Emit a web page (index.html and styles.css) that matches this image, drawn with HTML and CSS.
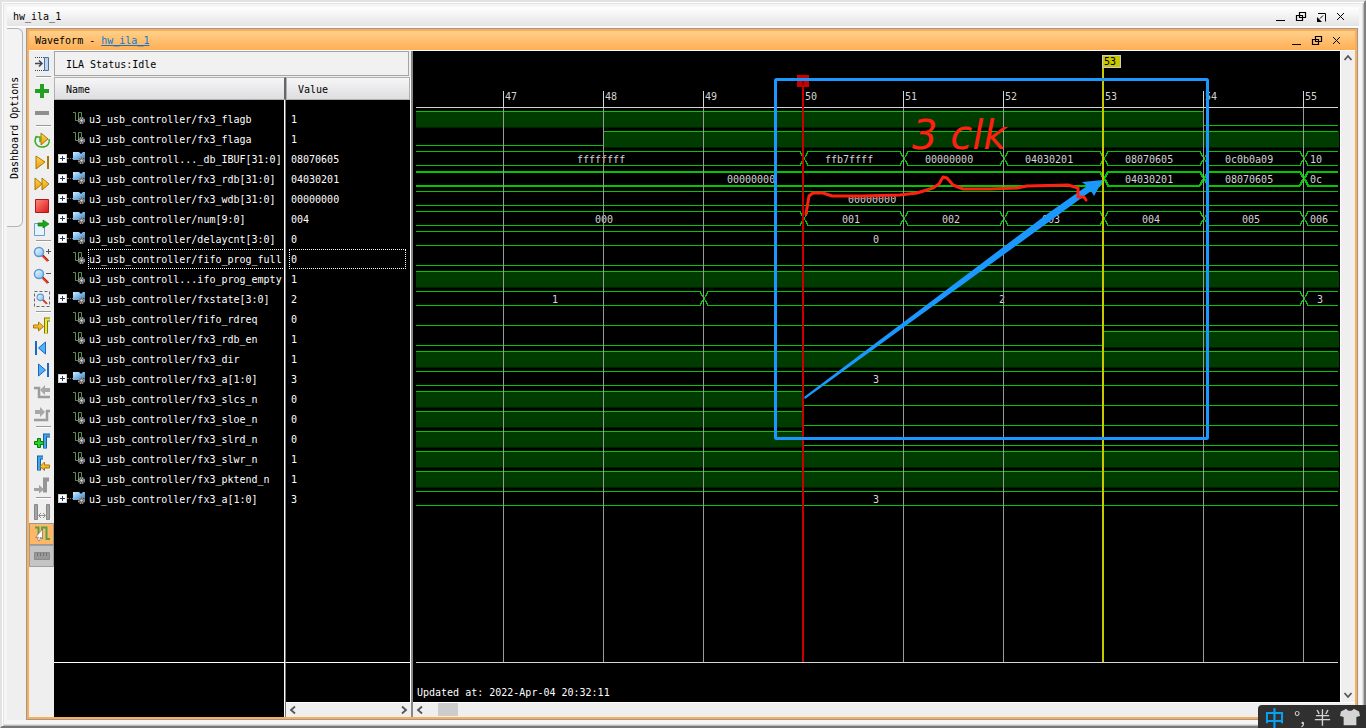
FILE: index.html
```html
<!DOCTYPE html>
<html lang="en">
<head>
<meta charset="utf-8">
<title>hw_ila_1</title>
<link rel="stylesheet" href="styles.css">
</head>
<body>
<svg class="defs" aria-hidden="true">
  <defs>
    <linearGradient id="gold" x2="0" y2="1"><stop offset="0" stop-color="#ffd84a"/><stop offset="1" stop-color="#f09a10"/></linearGradient>
    <linearGradient id="sky" x2="1" y2="1"><stop offset="0" stop-color="#d4efff"/><stop offset="1" stop-color="#1b7fd0"/></linearGradient>
    <linearGradient id="lens" x2="1" y2="1"><stop offset="0" stop-color="#f0faff"/><stop offset="1" stop-color="#7cc0f4"/></linearGradient>
    <linearGradient id="ruby" x2="1" y2="1"><stop offset="0" stop-color="#ff8a80"/><stop offset="1" stop-color="#d81818"/></linearGradient>
    <symbol id="i-dock" viewBox="0 0 18 18"><path d="M2 2.500h9M2 15.500h9" stroke="#345" stroke-dasharray="1 1"/><path d="M2 8.500h7M6 5.500l3 3-3 3" fill="none" stroke="#445" stroke-width="1.500"/><path d="M11.500 2.500h4v13h-4z" fill="#bcd4f0" stroke="#4a6fa5"/></symbol>
    <symbol id="i-add" viewBox="0 0 18 18"><path d="M7 2h4v5h5v4h-5v5H7v-5H2V7h5z" fill="#22a022"/></symbol>
    <symbol id="i-remove" viewBox="0 0 18 18"><path d="M2 7h14v4H2z" fill="#8e8e8e"/></symbol>
    <symbol id="i-rerun" viewBox="0 0 18 18"><path d="M8 2l7 6-7 6z" fill="url(#gold)" stroke="#a8780a"/><path d="M4 5C0 10 3 16 9 16s8-4 7-8M2 6h5v5" fill="none" stroke="#3faa2a" stroke-width="1.500"/></symbol>
    <symbol id="i-run" viewBox="0 0 18 18"><path d="M3 3l9 6-9 7z" fill="url(#gold)" stroke="#a8780a"/><path d="M14 3h2v13h-2z" fill="#a8780a"/></symbol>
    <symbol id="i-fast" viewBox="0 0 18 18"><path d="M2 3l7 6-7 6zM9 3l7 6-7 6z" fill="url(#gold)" stroke="#a8780a"/></symbol>
    <symbol id="i-stop" viewBox="0 0 18 18"><path d="M2.500 2.500h13v13h-13z" fill="url(#ruby)" stroke="#b01818"/></symbol>
    <symbol id="i-export" viewBox="0 0 18 18"><path d="M1.500 4.500h10v12h-10z" fill="#e6f4ff" stroke="#6f9cc8"/><path d="M5 4h5V1l6 4-6 4V7H5z" fill="#18a818" stroke="#0b7a0b" stroke-width=".7"/></symbol>
    <symbol id="i-glass" viewBox="0 0 18 18"><path d="M9 9l6 6" stroke="#e8402c" stroke-width="2.500"/><path d="M10 9l6 6" stroke="#702010" stroke-width=".7"/><circle cx="6" cy="6" r="4.500" fill="url(#lens)" stroke="#5f95d0" stroke-width="1.500"/></symbol>
    <symbol id="i-zoomin" viewBox="0 0 18 18"><use href="#i-glass"/><path d="M13 5.500h5M15.500 3v5" stroke="#555"/></symbol>
    <symbol id="i-zoomout" viewBox="0 0 18 18"><use href="#i-glass"/><path d="M13 5.500h5" stroke="#555"/></symbol>
    <symbol id="i-zoomfit" viewBox="0 0 18 18"><path d="M1.500 1.500h15v15h-15z" fill="none" stroke="#666" stroke-dasharray="3 2"/><use href="#i-glass" x="3" y="3" width="13" height="13"/></symbol>
    <symbol id="i-goto" viewBox="0 0 18 18"><path d="M17 2.500h-4v14" fill="none" stroke="#77772a" stroke-width="4"/><path d="M17 2.500h-4v14" fill="none" stroke="#f5ea20" stroke-width="2"/><path d="M.500 8h5V5l5 4.500-5 4.500v-3h-5z" fill="url(#gold)" stroke="#a8780a"/></symbol>
    <symbol id="i-first" viewBox="0 0 18 18"><path d="M2 2h2v14H2z" fill="#1d68b8"/><path d="M12.500 3v12L5.500 9z" fill="#4fb2fa" stroke="#1d68b8"/></symbol>
    <symbol id="i-last" viewBox="0 0 18 18"><path d="M14 2h2v14h-2z" fill="#1d68b8"/><path d="M5.500 3v12l7-6z" fill="#4fb2fa" stroke="#1d68b8"/></symbol>
    <symbol id="i-prevedge" viewBox="0 0 18 18"><path d="M1 5h5v9h11" fill="none" stroke="#9c9c9c" stroke-width="2.500"/><path d="M17 5h-5V2L7 7l5 5V9h5z" fill="#a8a8a8"/></symbol>
    <symbol id="i-nextedge" viewBox="0 0 18 18"><path d="M17 6h-3v9H1" fill="none" stroke="#9c9c9c" stroke-width="2.500"/><path d="M2 5h5V2l5 5-5 5V9H2z" fill="#a8a8a8"/></symbol>
    <symbol id="i-addmark" viewBox="0 0 18 18"><path d="M17 3.500h-5v13" fill="none" stroke="#17609f" stroke-width="4"/><path d="M17 3.500h-5v13" fill="none" stroke="#43a5ee" stroke-width="2"/><path d="M4.500 6.500h3v3h3v3h-3v3h-3v-3h-3v-3h3z" fill="#28d028" stroke="#087808"/></symbol>
    <symbol id="i-prevmark" viewBox="0 0 18 18"><path d="M10 3.500H6v13" fill="none" stroke="#17609f" stroke-width="4"/><path d="M10 3.500H6v13" fill="none" stroke="#43a5ee" stroke-width="2"/><path d="M16.500 11h-5V8L7 12.500l4.500 4V14h5z" fill="url(#gold)" stroke="#a8780a"/></symbol>
    <symbol id="i-nextmark" viewBox="0 0 18 18"><path d="M16 3.500h-4v13" fill="none" stroke="#959595" stroke-width="4"/><path d="M1 12h5V9l5 4.500-5 4V15H1z" fill="#a2a2a2"/></symbol>
    <symbol id="i-swap" viewBox="0 0 18 18"><path d="M1.500 1.500h3v15h-3zM13.500 1.500h3v15h-3z" fill="#a4a4a4" stroke="#888"/><path d="M6 12.500h6M8 10l-2.500 2.500L8 15M10 10l2.500 2.500L10 15" fill="none" stroke="#909090"/></symbol>
    <symbol id="i-snap" viewBox="0 0 18 18"><path d="M2 2.500h3.500V12M9 14V2.500h4.500V14H17" fill="none" stroke="#55a04a" stroke-width="2"/><path d="M9.500 4v10l-2-2-1 4-2-1 1-3-3 .5z" fill="#fff" stroke="#777" stroke-width=".7"/></symbol>
    <symbol id="i-ruler" viewBox="0 0 18 18"><path d="M1.500 5.500h15v7h-15z" fill="#999" stroke="#8a8a8a"/><path d="M4.500 6v3M7.500 6v3M10.500 6v3M13.500 6v3" stroke="#737373"/></symbol>
    <symbol id="s-gear" viewBox="0 0 12 12"><circle cx="8.500" cy="8.500" r="2.800" fill="#444" stroke="#a4a4a4" stroke-width="1.500" stroke-dasharray="1.600 .6"/><circle cx="8.500" cy="8.500" r="1.200" fill="#ddd"/></symbol>
    <symbol id="s-bit" viewBox="0 0 12 12"><path d="M0 .500h2.500v8h3V.500h3V5" fill="none" stroke="#5e8f50"/><use href="#s-gear"/></symbol>
    <symbol id="s-bus" viewBox="0 0 12 12"><path d="M0 0h6l2 2 2-2h2v7L9 5 6 8H0z" fill="url(#sky)"/><use href="#s-gear"/></symbol>
    <symbol id="w-min" viewBox="0 0 12 12"><path d="M1 9.500h9" stroke="#000"/></symbol>
    <symbol id="w-restore" viewBox="0 0 12 12"><path d="M4.500 1.500h6v5h-6zM1.500 4.500h6v5h-6z" fill="none" stroke="#000" stroke-width="1.200"/></symbol>
    <symbol id="w-float" viewBox="0 0 12 12"><path d="M3 2.500h7.500v8M5 7.500l3-3" fill="none" stroke="#000"/><path d="M2 6v5h5z"/></symbol>
    <symbol id="w-close" viewBox="0 0 12 12"><path d="M2 2l7 7M9 2l-7 7" stroke="#000"/></symbol>
    <symbol id="c-left" viewBox="0 0 10 10"><path d="M7 1.500L3 5l4 3.500" fill="none" stroke="#555" stroke-width="1.800"/></symbol>
    <symbol id="c-right" viewBox="0 0 10 10"><path d="M3 1.500L7 5 3 8.500" fill="none" stroke="#555" stroke-width="1.800"/></symbol>
    <symbol id="c-up" viewBox="0 0 10 10"><path d="M1.500 7L5 3l3.500 4" fill="none" stroke="#555" stroke-width="1.800"/></symbol>
    <symbol id="c-down" viewBox="0 0 10 10"><path d="M1.500 3L5 7l3.500-4" fill="none" stroke="#555" stroke-width="1.800"/></symbol>
  </defs>
</svg>

<div class="window">
  <header class="titlebar">
    <span class="title">hw_ila_1</span>
    <div class="controls">
      <button aria-label="Minimize"><svg><use href="#w-min"/></svg></button>
      <button aria-label="Restore"><svg><use href="#w-restore"/></svg></button>
      <button aria-label="Float"><svg><use href="#w-float"/></svg></button>
      <button aria-label="Close"><svg><use href="#w-close"/></svg></button>
    </div>
  </header>
  <div class="workspace">
    <button class="side-tab">Dashboard Options</button>
    <section class="panel">
      <header class="panel-title">
        <span>Waveform - <a href="#wave">hw_ila_1</a></span>
        <div class="controls">
          <button aria-label="Minimize panel"><svg><use href="#w-min"/></svg></button>
          <button aria-label="Restore panel"><svg><use href="#w-restore"/></svg></button>
          <button aria-label="Close panel"><svg><use href="#w-close"/></svg></button>
        </div>
      </header>
      <div class="content">
        <nav class="toolbar" id="toolbar" aria-label="Waveform tools"></nav>
        <div class="signals">
          <div class="status">ILA Status:Idle</div>
          <table class="list">
            <thead><tr><th class="name">Name</th><th class="value">Value</th></tr></thead>
            <tbody id="rows"></tbody>
          </table>
          <div class="rest"><div></div><div></div></div>
          <div class="rest tail"><div></div><div></div></div>
          <div class="foot"><div></div>
            <div class="hscroll"><button aria-label="Scroll values left"><svg><use href="#c-left"/></svg></button><button aria-label="Scroll values right"><svg><use href="#c-right"/></svg></button></div>
          </div>
        </div>
        <div class="viewer">
          <div class="canvas" id="wave"><p class="updated">Updated at: 2022-Apr-04 20:32:11</p></div>
          <div class="vscroll"><button aria-label="Scroll up"><svg><use href="#c-up"/></svg></button><button aria-label="Scroll down"><svg><use href="#c-down"/></svg></button></div>
          <div class="hscroll"><button aria-label="Scroll left"><svg><use href="#c-left"/></svg></button><span class="thumb"></span></div>
        </div>
      </div>
    </section>
  </div>
</div>
<div class="ime" lang="zh">
  <span class="mode">中</span><span>°,</span><span>半</span>
  <svg class="shirt" viewBox="0 0 22 18"><path d="M7 0c1 3 7 3 8 0l6 3 1 5-4 1v9H4V9L0 8l1-5z"/></svg>
</div>
<script src="app.js"></script>
</body>
</html>
```
FILE: styles.css
```css
* { box-sizing: border-box; }
body { margin: 0; height: 100vh; background: #efefef; color: #000; font: 10px/20px "DejaVu Sans Mono", "Noto Sans CJK SC", monospace; overflow: hidden; }
button { margin: 0; padding: 0; border: 0; background: none; color: inherit; font: inherit; display: flex; align-items: center; justify-content: center; }
.defs { position: absolute; width: 0; height: 0; }

.window { height: 100vh; display: flex; flex-direction: column; background: #f5f5f5; padding: 5px 5px 6px; border: 2px solid #e2e2e2; border-right-color: #808080; border-bottom-color: #777; box-shadow: inset 1px 1px #fff, inset -1px -1px #bbb, inset 2px 2px #e4e4e4, inset -2px -2px #e0e0e0; }
.titlebar { flex: none; height: 21px; padding: 0 12px 0 6px; display: flex; align-items: center; justify-content: space-between; background: linear-gradient(#fff, #e4e4e4); border-bottom: 2px solid #fbfbfb; }
.controls { display: flex; gap: 8px; }
.controls svg { width: 12px; height: 12px; display: block; }
.workspace { flex: 1; min-height: 0; display: flex; gap: 2px; background: #efefef; }
.side-tab { flex: none; width: 16px; height: 199px; border: 1px solid #b4b4b4; border-right: 0; border-radius: 6px 0 0 6px; background: #f3f3f3; writing-mode: vertical-rl; transform: rotate(180deg); }
.panel { flex: 1; min-width: 0; display: flex; flex-direction: column; border: 2px solid #ffad55; outline: 1px solid #999; margin: 1px 2px 1px 2px; background: #efefef; }
.panel-title { flex: none; height: 20px; padding: 0 12px 0 6px; display: flex; align-items: center; justify-content: space-between; background: linear-gradient(#ffd08a, #ffae55); border-bottom: 1px solid #fff; }
.panel-title a { color: #1478c8; }
.content { flex: 1; min-height: 0; display: flex; }

.toolbar { flex: none; width: 25px; padding-top: 2px; display: flex; flex-direction: column; }
.toolbar button { height: 22px; width: 100%; border: 1px solid transparent; }
.toolbar svg { width: 18px; height: 18px; }
.toolbar .on { background: #ffb765; border-color: #999; }
.toolbar .off { background: #c4c4c4; border-color: #a0a0a0; }
.toolbar hr { width: 15px; height: 5px; margin: 0 0 0 7px; border: 0; background: linear-gradient(transparent 1px, #999 1px, #999 2px, #fff 2px, #fff 3px, transparent 3px); }

.signals { flex: none; width: 357px; display: flex; flex-direction: column; background: #efefef; }
.status { flex: none; height: 25px; margin: 0 2px 1px 0; padding: 3px 11px 0; border: 1px solid #a4a4a4; background: #f1f1f1; }
.list { width: 100%; table-layout: fixed; border-collapse: separate; border-spacing: 0; background: #000; color: #fff; border-right: 1px solid #fff; }
.list th { height: 23px; padding: 2px 11px 0; text-align: left; font-weight: 400; line-height: 18px; color: #000; background: linear-gradient(#f6f6f6, #dedee2); border: 1px solid #b0b0b0; }
.list th.name { width: 232px; border-right: 2px solid #666; }
.list td { height: 20px; padding: 0; white-space: nowrap; }
.list td:first-child { border-right: 1px solid #777; box-shadow: inset -1px 0 #fff; }
.list tbody tr:first-child td { height: 29px; padding-top: 9px; }
.cell { display: flex; align-items: center; height: 20px; padding-left: 4px; }
.cell svg { flex: none; width: 12px; height: 12px; margin: 0 3px 2px 0; }
.expander { flex: none; width: 9px; height: 9px; margin-bottom: 2px; background: linear-gradient(#235, #235) center / 5px 1px no-repeat, linear-gradient(#235, #235) center / 1px 5px no-repeat, #fff; border: 1px solid #ccc; }
.dots { flex: none; width: 6px; margin-bottom: 2px; border-top: 1px dotted #777; }
.indent { flex: none; width: 15px; }
.label { flex: 1; height: 20px; padding-left: 1px; line-height: 22px; }
.val { display: block; height: 20px; line-height: 22px; margin: 0 4px 0 3px; padding-left: 2px; }
.focus .label, .focus .val { outline: 1px dotted #fff; outline-offset: -1px; }
.rest { flex: 1; display: grid; grid-template-columns: 232px 1fr; background: #000; border-right: 1px solid #fff; }
.rest > div { border-bottom: 1px solid #fff; }
.rest > div:first-child, .foot > div:first-child { border-right: 1px solid #777; box-shadow: inset -1px 0 #fff; background: #000; }
.tail { flex: 0 0 39px; }
.rest.tail > div { border-bottom: 0; }
.foot { flex: none; height: 15px; display: grid; grid-template-columns: 232px 1fr; }
.hscroll { display: flex; justify-content: space-between; background: #efefef; border-top: 1px solid #fff; }
.hscroll button, .vscroll button { width: 14px; height: 14px; }
.hscroll svg, .vscroll svg { width: 10px; height: 10px; }

.viewer { flex: 1; min-width: 0; display: grid; grid-template: 1fr 15px / 1fr 15px; border-left: 2px solid #888; }
.canvas { position: relative; min-width: 0; min-height: 0; overflow: hidden; background: #000; display: flex; align-items: flex-end; }
.canvas svg { position: absolute; inset: 0; width: 100%; height: 100%; }
.vscroll { display: flex; flex-direction: column; justify-content: space-between; background: #efefef; border-left: 1px solid #fff; }
.viewer .hscroll { grid-column: 1 / 3; justify-content: flex-start; }
.thumb { width: 20px; height: 13px; margin-left: 11px; background: #ccc; }
.updated { margin: 0; padding-left: 4px; color: #fff; line-height: 18px; }

.bits { fill: none; stroke: #00c800; shape-rendering: crispEdges; }
.fills { fill: #003c00; }
.bold { stroke-width: 2; }
.grid { stroke: #999; shape-rendering: crispEdges; }
.axis { stroke: #d4d4d4; shape-rendering: crispEdges; }
.canvas text { fill: #d4d4d4; font-size: 10px; }
.trigger { fill: #c80000; shape-rendering: crispEdges; }
.cursor { fill: #c8c800; shape-rendering: crispEdges; }
.canvas .cursor-label { fill: #000; }
.canvas .trigger-label { fill: #300; font-size: 9px; }
.mark { fill: none; stroke: #1a98ff; stroke-width: 3; }
.arrow { fill: #1a98ff; }
.ink { fill: none; stroke: #ff2010; stroke-width: 3; stroke-linecap: round; stroke-linejoin: round; }
.canvas .note { fill: #ff2010; font: italic 40px "DejaVu Sans", sans-serif; }

.ime { position: fixed; right: 0; bottom: 0; height: 23px; padding: 0 6px; display: flex; align-items: center; gap: 9px; border-radius: 4px 0 0 0; background: #303030; color: #d4d4d4; font: 17px/20px "Noto Sans CJK SC", sans-serif; }
.ime .mode { color: #08a0f0; font-size: 21px; font-weight: 500; }
.ime .shirt { width: 20px; height: 18px; fill: #d4d4d4; }
```
FILE: app.js
```js
const tools = ['dock', '-', 'add', 'remove', '-', 'rerun', 'run', 'fast', 'stop', 'export', '-',
  'zoomin', 'zoomout', 'zoomfit', '-', 'goto', 'first', 'last', 'prevedge', 'nextedge', '-',
  'addmark', 'prevmark', 'nextmark', '-', 'swap', 'snap', 'ruler'];
const state = { snap: 'on', ruler: 'off' };
document.getElementById('toolbar').innerHTML = tools.map(t => t === '-' ? '<hr>' :
  `<button class="${state[t] || ''}" aria-label="${t}"><svg><use href="#i-${t}"/></svg></button>`).join('');

const steps = [50, 51, 52, 53, 54, 55];
const signals = [
  { name: 'fx3_flagb', value: '1', level: 1, at: [54] },
  { name: 'fx3_flaga', value: '1', level: 0, at: [48] },
  { full: 'u3_usb_controll..._db_IBUF[31:0]', value: '08070605', bus: 1, at: steps,
    text: [[577, 'ffffffff'], [825, 'ffb7ffff'], [925, '00000000'], [1025, '04030201'], [1125, '08070605'], [1225, '0c0b0a09'], [1310, '10']] },
  { name: 'fx3_rdb[31:0]', value: '04030201', bus: 1, bold: 1, at: [53, 54, 55],
    text: [[727, '00000000'], [1125, '04030201'], [1225, '08070605'], [1310, '0c']] },
  { name: 'fx3_wdb[31:0]', value: '00000000', bus: 1, at: [], text: [[848, '00000000']] },
  { name: 'num[9:0]', value: '004', bus: 1, at: steps,
    text: [[595, '000'], [842, '001'], [942, '002'], [1042, '003'], [1142, '004'], [1242, '005'], [1310, '006']] },
  { name: 'delaycnt[3:0]', value: '0', bus: 1, at: [], text: [[873, '0']] },
  { name: 'fifo_prog_full', value: '0', level: 0, at: [], focus: 1 },
  { full: 'u3_usb_controll...ifo_prog_empty', value: '1', level: 1, at: [] },
  { name: 'fxstate[3:0]', value: '2', bus: 1, at: [49, 55], text: [[552, '1'], [999, '2'], [1317, '3']] },
  { name: 'fifo_rdreq', value: '0', level: 0, at: [] },
  { name: 'fx3_rdb_en', value: '1', level: 0, at: [53] },
  { name: 'fx3_dir', value: '1', level: 1, at: [] },
  { name: 'fx3_a[1:0]', value: '3', bus: 1, at: [], text: [[873, '3']] },
  { name: 'fx3_slcs_n', value: '0', level: 1, at: [50] },
  { name: 'fx3_sloe_n', value: '0', level: 1, at: [50] },
  { name: 'fx3_slrd_n', value: '0', level: 1, at: [50] },
  { name: 'fx3_slwr_n', value: '1', level: 1, at: [] },
  { name: 'fx3_pktend_n', value: '1', level: 1, at: [] },
  { name: 'fx3_a[1:0]', value: '3', bus: 1, at: [], text: [[873, '3']] }
];

document.getElementById('rows').innerHTML = signals.map(s => {
  const lead = s.bus ? '<span class="expander"></span><span class="dots"></span>' : '<span class="indent"></span>';
  return `<tr class="${s.focus ? 'focus' : ''}"><td><div class="cell">${lead}<svg><use href="#${s.bus ? 's-bus' : 's-bit'}"/></svg>` +
    `<span class="label">${s.full || 'u3_usb_controller/' + s.name}</span></div></td><td><span class="val">${s.value}</span></td></tr>`;
}).join('');

const pane = document.getElementById('wave');
const ORIGIN = 413;
const x = t => 90 + (t - 47) * 100;

function draw() {
  const old = pane.querySelector('svg');
  if (old) old.remove();
  const end = pane.clientWidth - 2;
  const base = pane.clientHeight - 40;
  let fills = '', lines = '', texts = '', grid = '', axis = '';
  signals.forEach((s, i) => {
    const top = 60.5 + i * 20, low = top + 14;
    const cuts = [3, ...s.at.map(x), end];
    let d = '';
    for (let k = 0; k < cuts.length - 1; k++) {
      const a = cuts[k], b = cuts[k + 1];
      if (s.bus) {
        const l = k ? a + 4 : a, r = k < cuts.length - 2 ? b - 3 : b;
        d += `M${l} ${top}H${r}M${l} ${low}H${r}`;
        if (k) d += `M${a - 3} ${top}l2 4l4 6l2 4M${a - 3} ${low}l2 -4l4 -6l2 -4`;
      } else {
        const high = (s.level + k) % 2;
        d += `M${a} ${high ? top : low}H${b}`;
        if (high) fills += `<rect x="${a}" y="${top}" width="${b - a + 1}" height="16"/>`;
      }
    }
    lines += `<path class="${s.bold ? 'bold' : ''}" d="${d}"/>`;
    (s.text || []).forEach(([px, v]) => { texts += `<text x="${px - ORIGIN}" y="${72 + i * 20}">${v}</text>`; });
  });
  for (let t = 47; x(t) < end; t++) {
    grid += `M${x(t) + .5} 57V${base}`;
    axis += `M${x(t) + .5} 40V57`;
    texts += `<text x="${x(t) + 2}" y="49">${t}</text>`;
  }
  const c = x(53), g = x(50);
  pane.insertAdjacentHTML('beforeend', `<svg role="img" aria-label="Waveform">
    <g class="fills">${fills}</g><g class="bits">${lines}</g>${texts}
    <path class="grid" d="${grid}"/><path class="axis" d="${axis}M3 56.500H${end}M3 ${base + .5}H${end}"/>
    <rect class="trigger" x="${g - 1}" y="35" width="2" height="${base - 35}"/><rect class="trigger" x="${g - 6}" y="24" width="12" height="12"/>
    <text class="trigger-label" x="${g - 3}" y="34">T</text>
    <rect class="cursor" x="${c - 1}" y="4" width="2" height="${base - 4}"/><rect class="cursor" x="${c - 1}" y="4" width="18" height="12" stroke="#ccc"/>
    <text class="cursor-label" x="${c + 1}" y="14">53</text>
    <rect class="mark" x="362.500" y="28.500" width="432" height="359" rx="1"/>
    <path class="arrow" d="M391 346L637 161L674 135L669 131L690 129L681 145L678 140L637 170L392 348z"/>
    <path class="ink" d="M393 163L396 145L400 142H410L419 145H449L487 144L504 142L520 137L526 133L530 126L534 127L540 134L550 138H577L604 137L614 135L655 134L665 137V146H671L673 149"/>
    <text class="note" x="499" y="98">3 clk</text>
  </svg>`);
}
draw();
window.addEventListener('resize', draw);
```
